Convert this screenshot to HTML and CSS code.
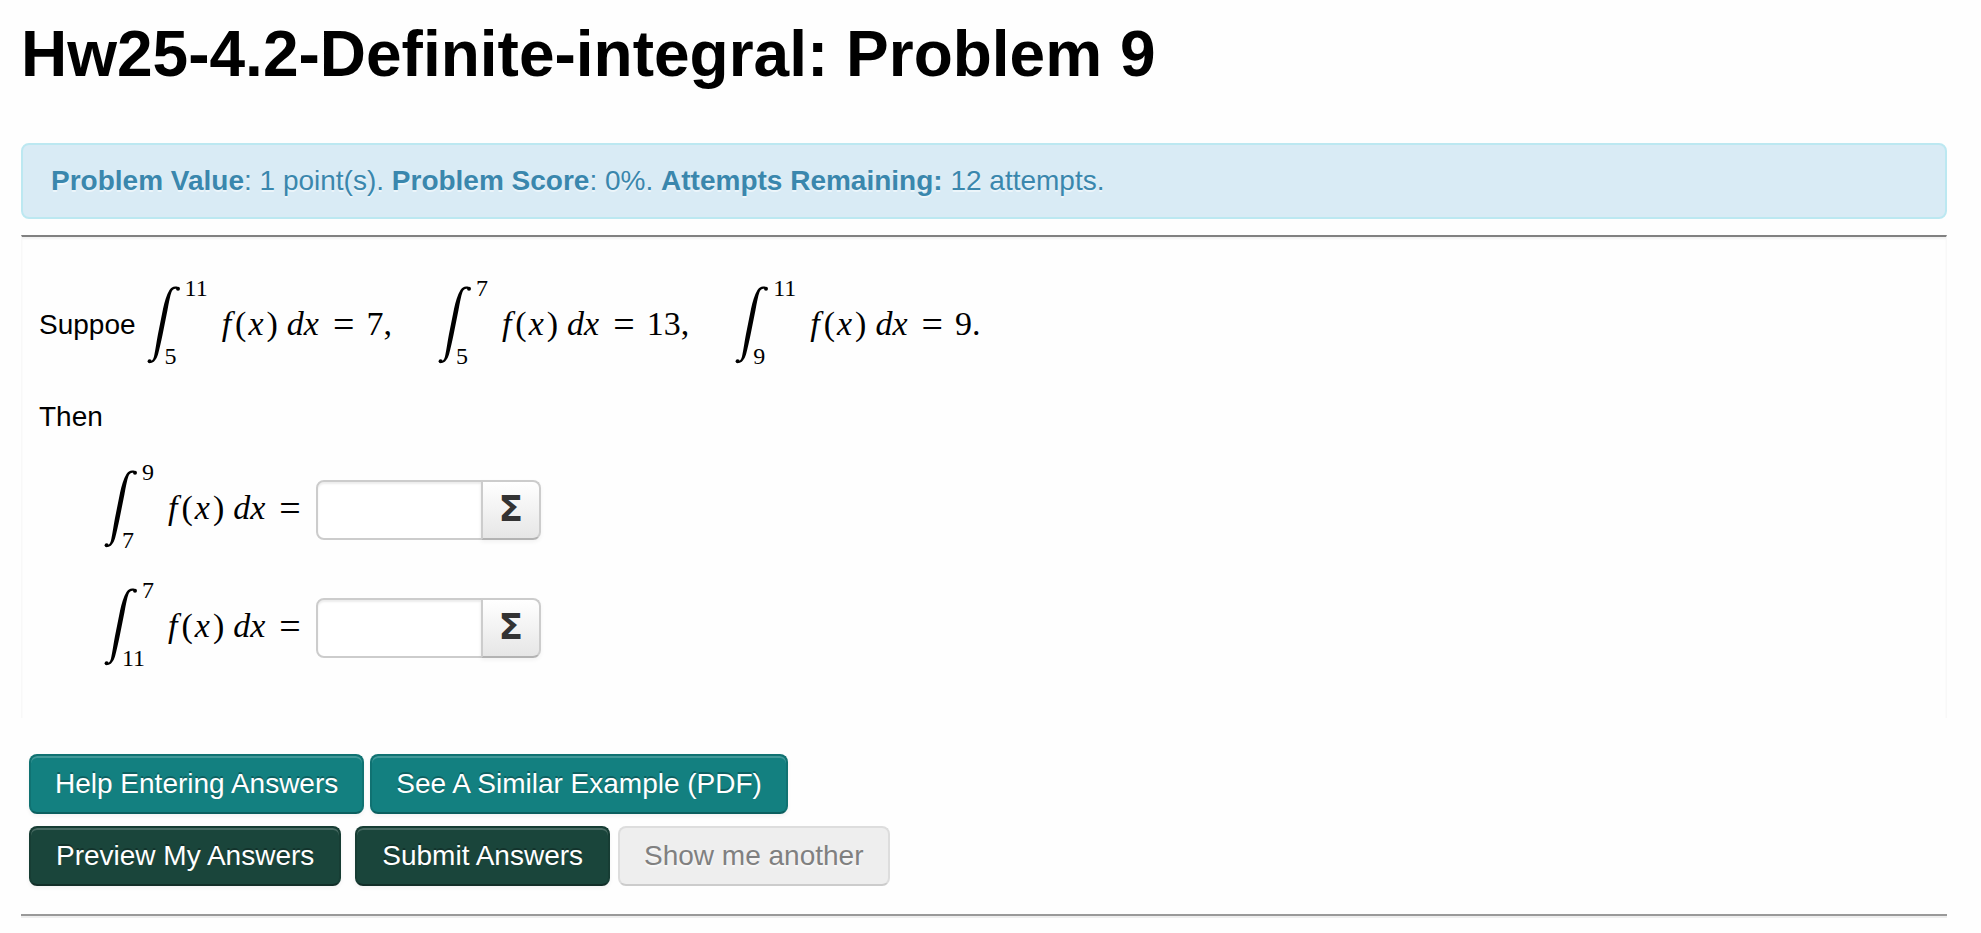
FILE: index.html
```html
<!DOCTYPE html>
<html lang="en">
<head>
    <meta charset="UTF-8">
    <meta name="viewport" content="width=device-width, initial-scale=1.0">
    <title>Hw25-4.2-Definite-integral: Problem 9</title>
    <link rel="stylesheet" href="styles.css">
</head>
<body>

<!-- Integral sign, reused by every formula -->
<svg class="defs" width="0" height="0" aria-hidden="true">
    <symbol id="int" viewBox="0 0 34 78">
        <path d="M31 1C27-.2 24.500 1 22.500 4C19.500 9 17.500 16 16 23L11 48C9.500 56 8.500 63 7.500 68C6.800 72.500 5.500 75 3.500 75L2.500 77C7 77.500 9.500 73 11 68.500C12.500 63 14 56 15.500 49L20.500 24C21.800 17 23 10 24.500 6C25.800 2.800 28 2.200 30 3Z"/>
        <circle cx="31" cy="2.800" r="2"/>
        <circle cx="2.600" cy="75.200" r="2"/>
    </symbol>
</svg>

<h1>Hw25-4.2-Definite-integral: Problem 9</h1>

<div class="alert">
    <b>Problem Value</b>: 1 point(s). <b>Problem Score</b>: 0%. <b>Attempts Remaining:</b> 12 attempts.
</div>

<form>
    <div class="problem">
        <div class="row given">
            <span class="word">Suppoe</span>
            <div class="math">
                <span class="integral"><svg><use href="#int"/></svg><span class="upper">11</span><span class="lower">5</span></span>
                <i class="fn">f</i><span>(<i class="var">x</i>)</span><i class="dx">dx</i><span class="eq">=</span><span>7,</span>
            </div>
            <div class="math">
                <span class="integral"><svg><use href="#int"/></svg><span class="upper">7</span><span class="lower">5</span></span>
                <i class="fn">f</i><span>(<i class="var">x</i>)</span><i class="dx">dx</i><span class="eq">=</span><span>13,</span>
            </div>
            <div class="math">
                <span class="integral"><svg><use href="#int"/></svg><span class="upper">11</span><span class="lower">9</span></span>
                <i class="fn">f</i><span>(<i class="var">x</i>)</span><i class="dx">dx</i><span class="eq">=</span><span>9.</span>
            </div>
        </div>

        <p>Then</p>

        <div class="row answer">
            <label class="math" for="answer1">
                <span class="integral"><svg><use href="#int"/></svg><span class="upper">9</span><span class="lower">7</span></span>
                <i class="fn">f</i><span>(<i class="var">x</i>)</span><i class="dx">dx</i><span class="eq">=</span>
            </label>
            <div class="input-group">
                <input type="text" id="answer1">
                <button type="button" class="sigma" aria-label="Equation editor">Σ</button>
            </div>
        </div>

        <div class="row answer">
            <label class="math" for="answer2">
                <span class="integral"><svg><use href="#int"/></svg><span class="upper">7</span><span class="lower">11</span></span>
                <i class="fn">f</i><span>(<i class="var">x</i>)</span><i class="dx">dx</i><span class="eq">=</span>
            </label>
            <div class="input-group">
                <input type="text" id="answer2">
                <button type="button" class="sigma" aria-label="Equation editor">Σ</button>
            </div>
        </div>
    </div>

    <div class="buttons links">
        <a class="btn teal" href="#">Help Entering Answers</a>
        <a class="btn teal" href="#">See A Similar Example (PDF)</a>
    </div>
    <div class="buttons">
        <button type="button" class="btn dark preview">Preview My Answers</button>
        <button type="submit" class="btn dark">Submit Answers</button>
        <button type="button" class="btn" disabled>Show me another</button>
    </div>
</form>

<hr>

</body>
</html>
```

FILE: styles.css
```css
* {
    margin: 0;
    padding: 0;
    box-sizing: border-box;
}

body {
    font-family: "Helvetica Neue", Helvetica, "Liberation Sans", Arial, sans-serif;
    font-size: 28px;
    line-height: 40px;
    color: #000;
    background: #fefefe;
    padding: 14px 34px 0 21px;
}

.defs {
    display: block;
}

h1 {
    font-size: 64px;
    line-height: 80px;
    margin-bottom: 49px;
}

.alert {
    padding: 16px 28px;
    margin-bottom: 16px;
    color: #3a87ad;
    background-color: #d9ebf5;
    border: 2px solid #bce8f1;
    border-radius: 8px;
    text-shadow: 0 2px 0 rgba(255, 255, 255, 0.5);
}

/* Problem text */
.problem {
    padding: 39px 17px 44px;
    border: 1px solid #f8f8f8;
    border-top: 2px solid #808080;
    border-bottom: 0;
    box-shadow: inset 0 2px 2px rgba(0, 0, 0, 0.05);
}

.row {
    display: flex;
    flex-wrap: wrap;
    align-items: center;
}

.word {
    padding-top: 2px;
    margin-right: 11px;
}

.given {
    margin-bottom: 25px;
}

.given .math {
    margin-right: 46px;
}

.problem p {
    margin-bottom: 23px;
}

.answer {
    padding-left: 65px;
}

.answer + .answer {
    margin-top: 22px;
}

/* Formulas */
.math {
    display: flex;
    align-items: center;
    font-family: "Liberation Serif", "Times New Roman", serif;
    font-size: 34px;
    line-height: 40px;
}

.integral {
    display: grid;
    grid-template-columns: 18px 20px auto;
    grid-template-rows: 68px 24px;
    padding-bottom: 4px;
    font-size: 24px;
    line-height: 24px;
    margin-right: 14px;
}

.integral svg {
    grid-area: 1 / 1 / 3 / 3;
    width: 34px;
    height: 78px;
    margin-top: 10px;
}

.upper {
    grid-area: 1 / 3;
}

.lower {
    grid-area: 2 / 2 / 3 / 4;
}

.fn {
    margin-right: 4px;
}

.var {
    margin: 0 3px 0 2px;
}

.dx {
    margin-left: 9px;
}

.eq {
    font-size: 38px;
    margin: 0 12px 0 14px;
}

/* Answer boxes */
.input-group {
    display: flex;
    padding-top: 4px;
    margin-left: 3px;
}

.input-group input {
    width: 167px;
    height: 60px;
    padding: 8px 12px;
    font: inherit;
    color: #555;
    background: #fff;
    border: 2px solid #ccc;
    border-radius: 8px 0 0 8px;
    box-shadow: inset 0 2px 2px rgba(0, 0, 0, 0.075);
}

.sigma {
    width: 60px;
    height: 60px;
    margin-left: -2px;
    padding-bottom: 2px;
    font-family: "DejaVu Sans", sans-serif;
    font-size: 36px;
    font-weight: bold;
    line-height: 40px;
    color: #333;
    background: linear-gradient(to bottom, #fff, #e6e6e6);
    border: 2px solid #ccc;
    border-bottom-color: #b3b3b3;
    border-radius: 0 8px 8px 0;
    box-shadow: 0 2px 4px rgba(0, 0, 0, 0.05);
    cursor: pointer;
}

/* Buttons */
.buttons {
    display: flex;
    flex-wrap: wrap;
    gap: 8px;
    padding-left: 8px;
    margin-top: 12px;
}

.links {
    gap: 6px;
    margin-top: 36px;
}

.btn {
    font: inherit;
    padding: 8px 24px;
    color: #808080;
    background-color: #eee;
    border: 2px solid #ddd;
    border-bottom-color: #ccc;
    border-radius: 8px;
    text-decoration: none;
    text-shadow: 0 2px 2px rgba(255, 255, 255, 0.75);
}

.teal,
.dark {
    color: #fff;
    text-shadow: 0 -2px 0 rgba(0, 0, 0, 0.25);
    box-shadow: inset 0 2px 0 rgba(255, 255, 255, 0.2), 0 2px 4px rgba(0, 0, 0, 0.05);
    cursor: pointer;
}

.teal {
    background-color: #138080;
    border-color: #107272 #107272 #0c5f5f;
}

.dark {
    padding: 8px 25px;
    background-color: #1a453b;
    border-color: #173d34 #173d34 #122e28;
}

.preview {
    margin-right: 6px;
}

hr {
    margin-top: 28px;
    border: 0;
    border-top: 2px solid #999;
    border-bottom: 2px solid #eee;
}
```
